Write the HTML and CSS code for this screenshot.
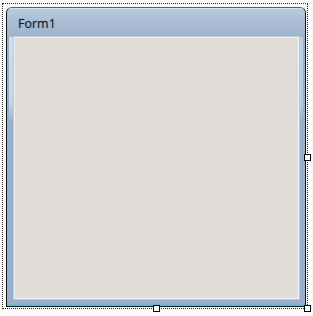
FILE: index.html
```html
<!DOCTYPE html>
<html lang="en">
<head>
  <meta charset="UTF-8">
  <title>Form1 - Designer</title>
  <link rel="stylesheet" href="styles.css">
</head>
<body>
  <div class="selection">
    <div class="form-window">
      <div class="title-bar">
        <span class="title">Form1</span>
      </div>
      <div class="frame-body">
        <div class="client"></div>
      </div>
    </div>
    <span class="grip grip-right"></span>
    <span class="grip grip-bottom"></span>
    <span class="grip grip-corner"></span>
  </div>
</body>
</html>
```

FILE: styles.css
```css
html, body {
  margin: 0;
  padding: 0;
  width: 313px;
  height: 316px;
  background-color: #fbfbfb;
  overflow: hidden;
  font-family: "Open Sans", "DejaVu Sans", sans-serif;
}
.selection {
  position: relative;
  box-sizing: border-box;
  width: 306px;
  height: 306px;
  margin: 3px 0 0 2px;
  padding: 3px 0 0 3px;
  border: 1px dotted #222;
}
.form-window {
  box-sizing: border-box;
  width: 300px;
  height: 300px;
  display: flex;
  flex-direction: column;
  border: 1px solid #111;
  border-top-color: #50606e;
  border-radius: 6px 6px 0 0;
  background: linear-gradient(to bottom, #aebfd4 0%, #9cb2cc 40%, #98aec9 100%);
  overflow: hidden;
}
.title-bar {
  height: 29px;
  display: flex;
  align-items: center;
  padding-left: 11px;
  background: linear-gradient(to bottom, #bccbdd 0%, #a9bcd3 50%, #9fb4ce 100%);
  box-shadow: inset 0 1px 0 #d8e2ee;
}
.title {
  font-size: 12.5px;
  color: #0c1c2c;
  padding-top: 2px;
  text-shadow: 0 0 1px rgba(12, 28, 44, 0.35);
}
.frame-body {
  flex: 1;
  display: flex;
  padding: 0 6px 0 7px;
  border-bottom: 2px solid #6fb6d3;
  background:
    linear-gradient(to bottom, rgba(215,230,242,0.85) 0%, rgba(215,230,242,0.7) 25%, rgba(215,230,242,0) 32%) 2px 0 / 4px 100% no-repeat,
    linear-gradient(to bottom, rgba(215,230,242,0.6) 0%, rgba(215,230,242,0.5) 25%, rgba(215,230,242,0) 32%) right 2px top 0 / 4px 100% no-repeat,
    #98afca;
}
.client {
  flex: 1;
  margin-bottom: 5px;
  background-color: #e0dcd8;
  border: 1px solid #eef2f6;
  box-shadow: 0 0 0 1px #b9c9da;
}
.grip {
  position: absolute;
  box-sizing: border-box;
  width: 7px;
  height: 7px;
  background-color: #fff;
  border: 1px solid #000;
}
.grip-right {
  right: -4px;
  top: 150px;
}
.grip-bottom {
  left: 150px;
  bottom: -4px;
}
.grip-corner {
  right: -4px;
  bottom: -4px;
}
```
